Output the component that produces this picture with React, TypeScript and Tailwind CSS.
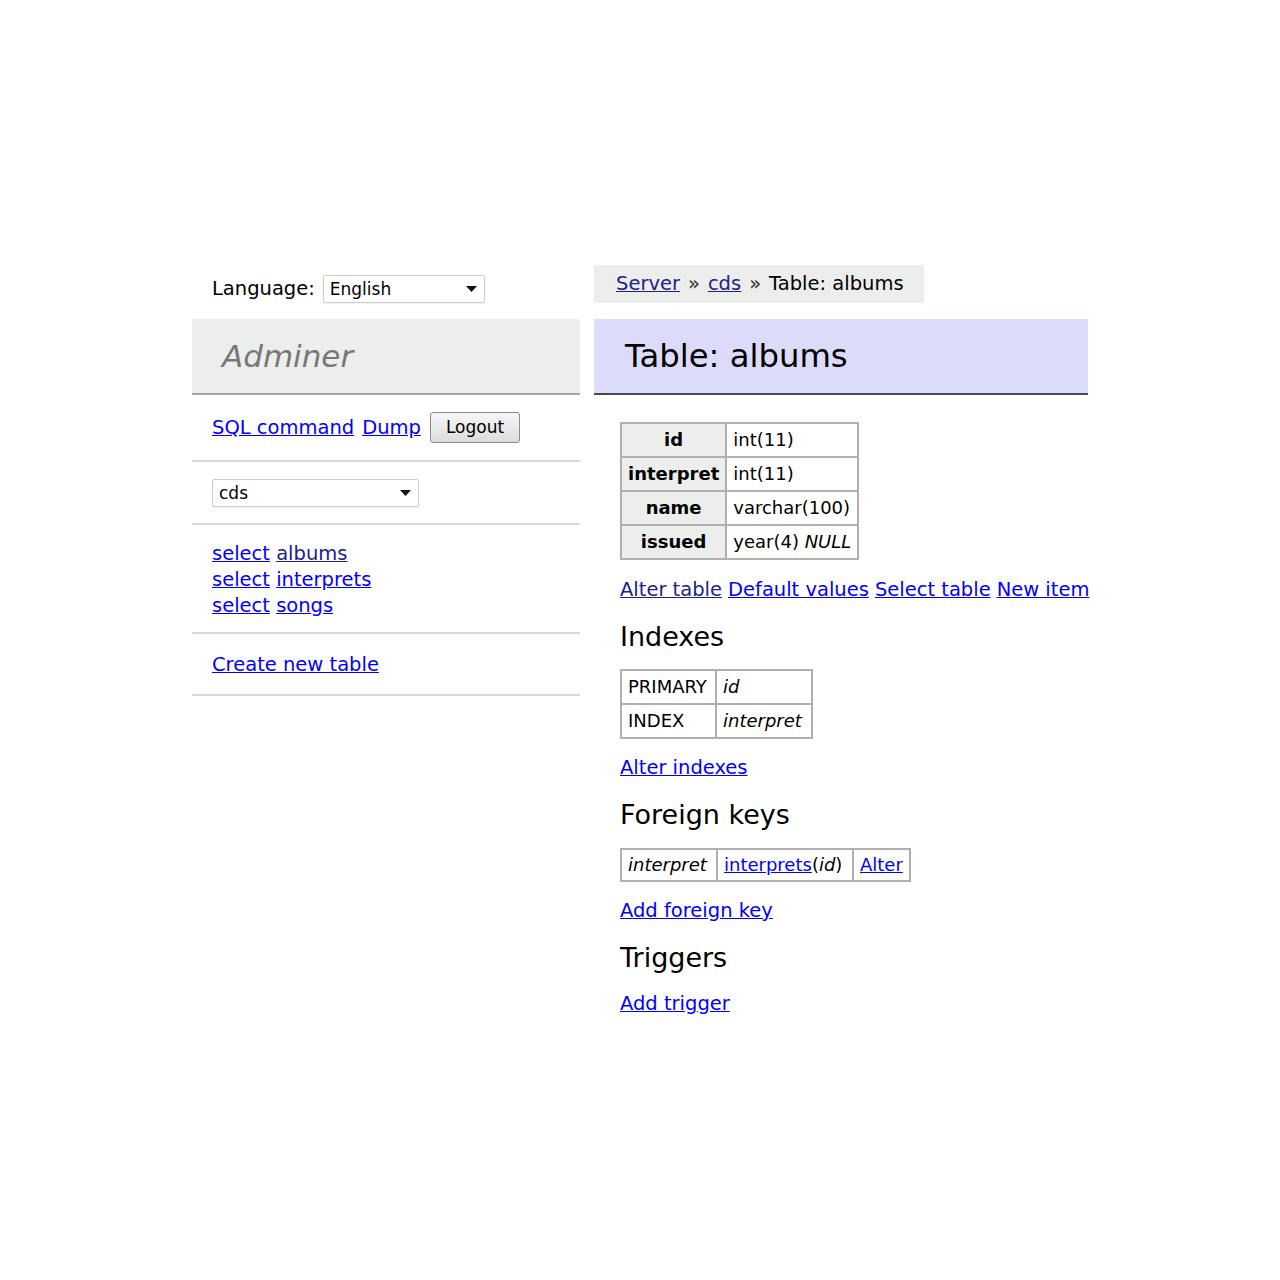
import React from "react";

const Arrow = () => (
  <svg width="11" height="6" viewBox="0 0 11 6" className="block">
    <path d="M0 0 L11 0 L5.5 6 Z" fill="#111" />
  </svg>
);

const FakeSelect = ({ label, w }: { label: string; w: string }) => (
  <div
    className={`${w} h-[28px] bg-white border border-[#cdcdcd] rounded-[2px] shadow-[0_1px_1px_rgba(0,0,0,0.06)] flex items-center justify-between pl-[6px] pr-[7px] text-[17px] leading-none text-black`}
  >
    <span>{label}</span>
    <Arrow />
  </div>
);

const A = ({ children, v }: { children: React.ReactNode; v?: boolean }) => (
  <a href="#" className={`${v ? "text-[#20208a]" : "text-[#0000ff]"} underline`}>
    {children}
  </a>
);

export default function App() {
  return (
    <div className="w-full min-h-[1280px] bg-white font-['DejaVu_Sans',Verdana,sans-serif] text-black text-[19.5px] leading-[26px] pl-[192px] pt-[265px]">
      <div className="flex items-start">
        {/* Menu */}
        <div className="w-[388px] shrink-0">
          <div className="flex items-center gap-[8px] pl-[20px] h-[28px] mt-[10px] mb-[16px]">
            <span>Language:</span>
            <FakeSelect label="English" w="w-[162px]" />
          </div>
          <div className="h-[76px] bg-[#eceeec] border-b-2 border-[#a3a3a3] flex items-center pl-[30px]">
            <span className="italic text-[31px] leading-none text-[#777]">Adminer</span>
          </div>
          <div className="px-[20px] pt-[17px] pb-[17px] border-b-2 border-[#d9d9d9] flex items-center gap-[8px]">
            <A>SQL command</A>
            <A>Dump</A>
            <button className="h-[31px] px-[15px] ml-[1px] bg-linear-to-b from-[#f7f7f7] to-[#dcdcdc] border border-[#8c8c8c] rounded-[3px] text-[17px] leading-none text-black">
              Logout
            </button>
          </div>
          <div className="px-[20px] pt-[17px] pb-[16px] border-b-2 border-[#d9d9d9]">
            <FakeSelect label="cds" w="w-[207px]" />
          </div>
          <div className="px-[20px] pt-[16px] pb-[13px] border-b-2 border-[#d9d9d9] flex flex-col">
            <div>
              <A>select</A> <A v>albums</A>
            </div>
            <div>
              <A>select</A> <A>interprets</A>
            </div>
            <div>
              <A>select</A> <A>songs</A>
            </div>
          </div>
          <div className="px-[20px] pt-[18px] pb-[16px] border-b-2 border-[#d9d9d9]">
            <A>Create new table</A>
          </div>
        </div>

        {/* Content */}
        <div className="ml-[14px] w-[494px] shrink-0">
          <div className="inline-block bg-[#eceeec] h-[38px] leading-[38px] pl-[22px] pr-[20px] whitespace-nowrap">
            <A v>Server</A>
            <span className="mx-[8px] text-[#333]">»</span>
            <A v>cds</A>
            <span className="mx-[8px] text-[#333]">»</span>
            Table: albums
          </div>
          <div className="mt-[16px] h-[76px] bg-[#dcdcfa] border-b-2 border-[#4a4a4a] flex items-center pl-[31px]">
            <span className="text-[32.3px] leading-none">Table: albums</span>
          </div>

          <div className="pl-[26px] pt-[27px] flex flex-col items-start">
            <table className="border-collapse border-2 border-[#b0b0b0] text-[18px] leading-[26px] whitespace-nowrap">
              <tbody>
                {[
                  ["id", <>int(11)</>],
                  ["interpret", <>int(11)</>],
                  ["name", <>varchar(100)</>],
                  [
                    "issued",
                    <>
                      year(4) <i>NULL</i>
                    </>,
                  ],
                ].map(([k, v], i) => (
                  <tr key={i}>
                    <th className="w-[103px] h-[34px] px-[6px] py-0 bg-[#eceeec] border-2 border-[#b0b0b0] font-bold text-center">
                      {k}
                    </th>
                    <td className="w-[132px] h-[34px] px-[6px] py-0 border-2 border-[#b0b0b0] text-left whitespace-nowrap">{v}</td>
                  </tr>
                ))}
              </tbody>
            </table>

            <div className="mt-[17px] flex gap-[6px] whitespace-nowrap">
              <A v>Alter table</A>
              <A>Default values</A>
              <A>Select table</A>
              <A>New item</A>
            </div>

            <h3 className="mt-[17px] text-[27px] leading-[34px] font-normal">Indexes</h3>

            <table className="mt-[15px] border-collapse border-2 border-[#b0b0b0] text-[18px] leading-[26px] whitespace-nowrap">
              <tbody>
                <tr>
                  <td className="w-[95px] h-[34px] px-[6px] py-0 border-2 border-[#b0b0b0]">PRIMARY</td>
                  <td className="w-[96px] h-[34px] px-[6px] py-0 border-2 border-[#b0b0b0] italic">id</td>
                </tr>
                <tr>
                  <td className="w-[95px] h-[34px] px-[6px] py-0 border-2 border-[#b0b0b0]">INDEX</td>
                  <td className="w-[96px] h-[34px] px-[6px] py-0 border-2 border-[#b0b0b0] italic">interpret</td>
                </tr>
              </tbody>
            </table>

            <div className="mt-[16px]">
              <A>Alter indexes</A>
            </div>

            <h3 className="mt-[17px] text-[27px] leading-[34px] font-normal">Foreign keys</h3>

            <table className="mt-[16px] border-collapse border-2 border-[#b0b0b0] text-[18px] leading-[26px] whitespace-nowrap">
              <tbody>
                <tr>
                  <td className="w-[96px] h-[32px] px-[6px] py-0 border-2 border-[#b0b0b0] italic">interpret</td>
                  <td className="w-[136px] h-[32px] px-[6px] py-0 border-2 border-[#b0b0b0]">
                    <A>interprets</A>(<i>id</i>)
                  </td>
                  <td className="w-[57px] h-[32px] px-[6px] py-0 border-2 border-[#b0b0b0]">
                    <A>Alter</A>
                  </td>
                </tr>
              </tbody>
            </table>

            <div className="mt-[16px]">
              <A>Add foreign key</A>
            </div>

            <h3 className="mt-[17px] text-[27px] leading-[34px] font-normal">Triggers</h3>

            <div className="mt-[16px]">
              <A>Add trigger</A>
            </div>
          </div>
        </div>
      </div>
    </div>
  );
}
